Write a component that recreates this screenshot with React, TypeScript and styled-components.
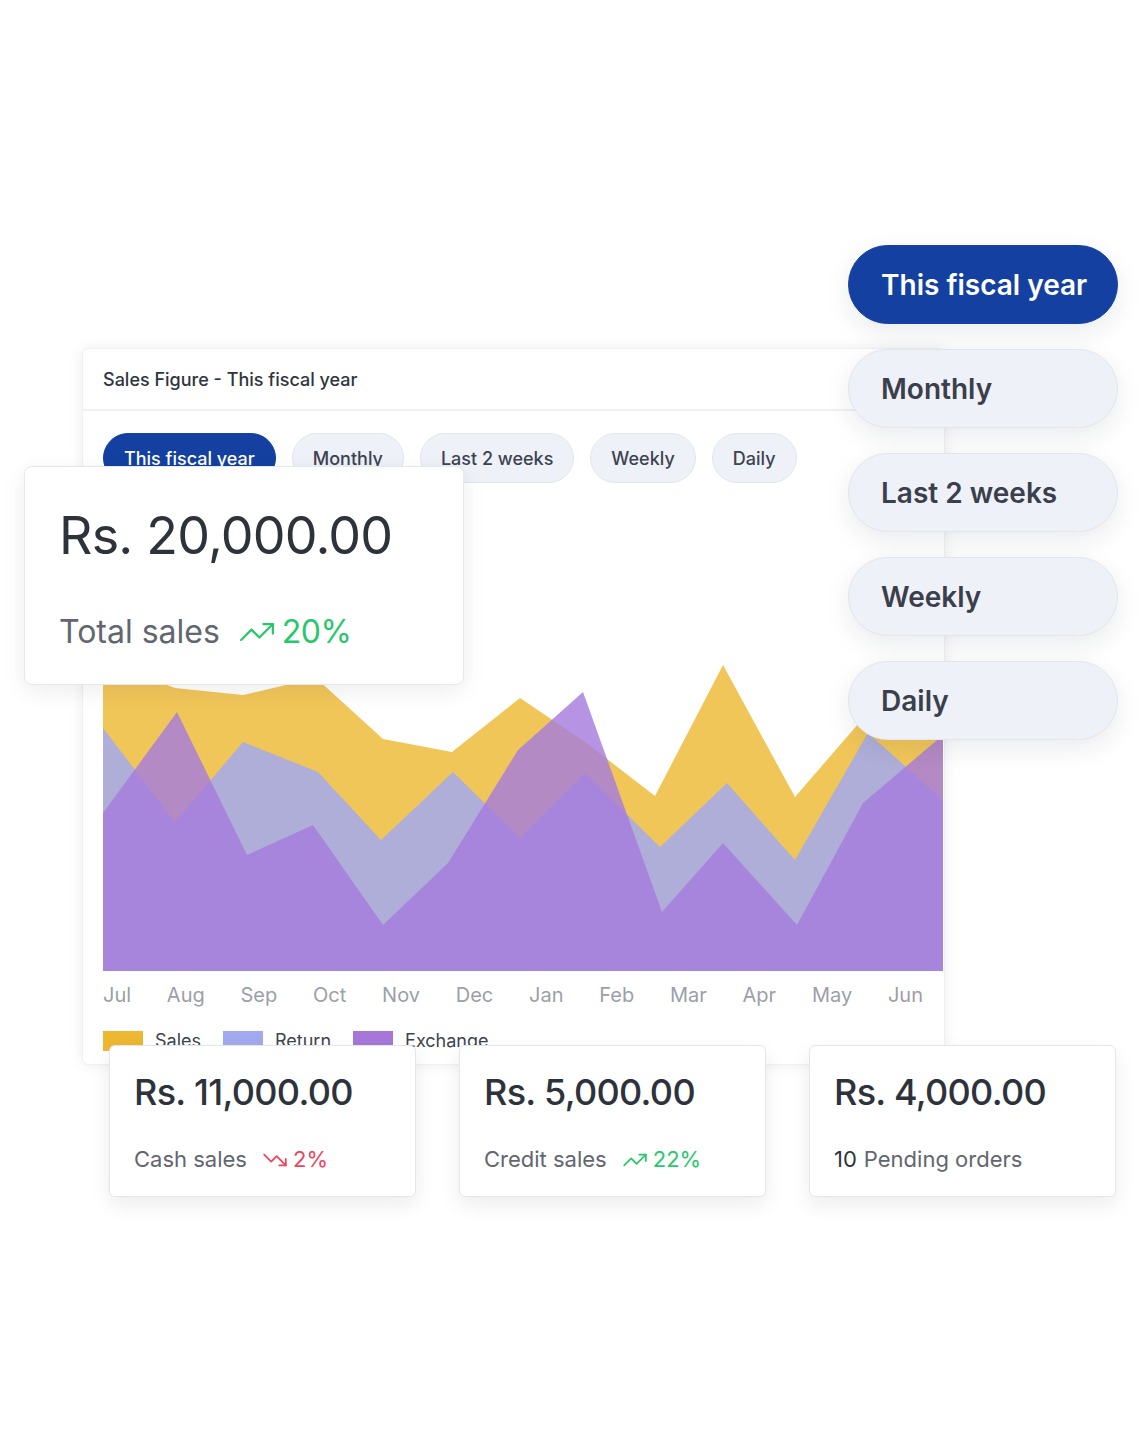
import React from "react";
import styled, { createGlobalStyle } from "styled-components";
import { TrendingUp, TrendingDown } from "lucide-react";

const GlobalStyle = createGlobalStyle`
  html, body { margin: 0; padding: 0; background: #ffffff; }
  body { font-family: Inter, "Noto Sans", sans-serif; -webkit-font-smoothing: antialiased; }
  * { box-sizing: border-box; }
`;

const Stage = styled.div`
  position: relative;
  width: 1140px;
  height: 1441px;
  overflow: hidden;
  padding: 348px 0 0 82px;
  background: #ffffff;
`;

const MainCard = styled.section`
  width: 863px;
  height: 717px;
  background: #fff;
  border: 1px solid #eef0f3;
  border-radius: 6px;
  box-shadow: 0 0 14px rgba(20, 30, 50, 0.07);
  display: flex;
  flex-direction: column;
`;

const CardHeader = styled.header`
  height: 62px;
  flex: none;
  display: flex;
  align-items: center;
  padding: 0 20px;
  border-bottom: 2px solid #eef0f3;
  font-size: 18px;
  font-weight: 500;
  color: #2f3540;
`;

const CardBody = styled.div`
  padding: 22px 20px 0 20px;
  display: flex;
  flex-direction: column;
`;

const TabRow = styled.div`
  display: flex;
  gap: 16px;
`;

const Tab = styled.div<{ $active?: boolean }>`
  height: 50px;
  padding: 0 20px;
  display: flex;
  align-items: center;
  border-radius: 25px;
  font-size: 18px;
  font-weight: 500;
  border: 1px solid ${(p) => (p.$active ? "#1441a1" : "#e3e6ed")};
  background: ${(p) => (p.$active ? "#1441a1" : "#eef1f8")};
  color: ${(p) => (p.$active ? "#ffffff" : "#3d4350")};
`;

const ChartSvg = styled.svg`
  display: block;
  margin-top: 17px;
  width: 840px;
  height: 471px;
`;

const MonthRow = styled.div`
  margin-top: 12px;
  width: 820px;
  display: flex;
  justify-content: space-between;
  font-size: 20px;
  line-height: 24px;
  color: #9b9fa7;
`;

const Legend = styled.div`
  margin-top: 24px;
  display: flex;
  align-items: center;
  gap: 12px;
  font-size: 18px;
  line-height: 20px;
  color: #3d4350;
`;

const LegendItem = styled.div`
  display: flex;
  align-items: center;
  gap: 12px;
  margin-right: 10px;
`;

const Swatch = styled.span<{ $color: string }>`
  width: 40px;
  height: 20px;
  background: ${(p) => p.$color};
  display: inline-block;
`;

const TotalCard = styled.div`
  position: absolute;
  left: 24px;
  top: 466px;
  width: 440px;
  height: 219px;
  background: #fff;
  border: 1px solid #e6e8ec;
  border-radius: 8px;
  box-shadow: 0 6px 22px rgba(20, 30, 50, 0.08);
  padding: 37px 34px 0 34px;
`;

const BigAmount = styled.div`
  font-size: 52px;
  line-height: 63px;
  font-weight: 400;
  color: #2e333b;
  letter-spacing: -0.8px;
`;

const StatLine = styled.div<{ $size: number; $gap: number }>`
  display: flex;
  align-items: center;
  font-size: ${(p) => p.$size}px;
  line-height: ${(p) => Math.round(p.$size * 1.22)}px;
  color: #62666f;
  margin-top: ${(p) => p.$gap}px;
`;

const Label = styled.span<{ $space: number }>`
  margin-right: ${(p) => p.$space}px;
`;

const Change = styled.span<{ $up?: boolean; $space: number }>`
  display: inline-flex;
  align-items: center;
  gap: ${(p) => p.$space}px;
  color: ${(p) => (p.$up ? "#27c86a" : "#f0435e")};
`;

const Pct = styled.span`
  letter-spacing: -0.5px;
`;

const PillStack = styled.div`
  position: absolute;
  left: 848px;
  top: 245px;
  width: 270px;
  display: flex;
  flex-direction: column;
  gap: 25px;
`;

const BigPill = styled.div<{ $active?: boolean }>`
  height: 79px;
  border-radius: 40px;
  display: flex;
  align-items: center;
  padding-left: 32px;
  font-size: 28px;
  font-weight: 600;
  border: 1px solid ${(p) => (p.$active ? "#1441a1" : "#e2e5eb")};
  background: ${(p) => (p.$active ? "#1441a1" : "#eef1f8")};
  color: ${(p) => (p.$active ? "#ffffff" : "#3a3f4b")};
  box-shadow: 0 8px 26px rgba(20, 30, 50, 0.09);
`;

const BottomRow = styled.div`
  position: absolute;
  left: 109px;
  top: 1045px;
  display: flex;
  gap: 43px;
`;

const SmallCard = styled.div`
  width: 307px;
  height: 152px;
  background: #fff;
  border: 1px solid #e4e6ea;
  border-radius: 6px;
  box-shadow: 0 8px 20px rgba(20, 30, 50, 0.08);
  padding: 24px 24px 0 24px;
`;

const MidAmount = styled.div`
  font-size: 36px;
  line-height: 44px;
  font-weight: 500;
  color: #2e333b;
  letter-spacing: -0.7px;
`;

const Count = styled.span`
  color: #2e333b;
  margin-right: 7px;
`;

const OX = 103;
const OY = 500;
const BASE = 971;

const toPoints = (pts: [number, number][]) => {
  const first = pts[0][0];
  const last = pts[pts.length - 1][0];
  const line = pts.map(([x, y]) => `${x - OX},${y - OY}`).join(" ");
  return `${first - OX},${BASE - OY} ${line} ${last - OX},${BASE - OY}`;
};

const sales: [number, number][] = [
  [103, 660], [175, 688], [243, 695], [316, 678], [383, 739], [452, 752],
  [520, 698], [585, 742], [655, 796], [723, 665], [795, 797], [865, 716], [943, 695],
];
const returns: [number, number][] = [
  [103, 728], [175, 822], [243, 742], [318, 772], [381, 840], [453, 772],
  [520, 838], [585, 773], [660, 847], [727, 783], [795, 860], [868, 733], [943, 800],
];
const exchange: [number, number][] = [
  [103, 813], [177, 712], [247, 855], [313, 825], [383, 925], [448, 863],
  [518, 750], [583, 692], [662, 912], [723, 843], [797, 925], [863, 803], [943, 735],
];

const months = ["Jul", "Aug", "Sep", "Oct", "Nov", "Dec", "Jan", "Feb", "Mar", "Apr", "May", "Jun"];
const tabs = ["This fiscal year", "Monthly", "Last 2 weeks", "Weekly", "Daily"];

export default function App() {
  return (
    <>
      <GlobalStyle />
      <Stage>
        <MainCard>
          <CardHeader>Sales Figure - This fiscal year</CardHeader>
          <CardBody>
            <TabRow>
              {tabs.map((t, i) => (
                <Tab key={t} $active={i === 0}>{t}</Tab>
              ))}
            </TabRow>
            <ChartSvg viewBox="0 0 840 471">
              <polygon points={toPoints(sales)} fill="#edb830" fillOpacity={0.8} />
              <polygon points={toPoints(returns)} fill="#a3a9ee" fillOpacity={0.85} />
              <polygon points={toPoints(exchange)} fill="#a67cdd" fillOpacity={0.82} />
            </ChartSvg>
            <MonthRow>
              {months.map((m) => (
                <span key={m}>{m}</span>
              ))}
            </MonthRow>
            <Legend>
              <LegendItem><Swatch $color="#edb731" />Sales</LegendItem>
              <LegendItem><Swatch $color="#a2a9ee" />Return</LegendItem>
              <LegendItem><Swatch $color="#a577d9" />Exchange</LegendItem>
            </Legend>
          </CardBody>
        </MainCard>

        <TotalCard>
          <BigAmount>Rs. 20,000.00</BigAmount>
          <StatLine $size={32} $gap={45}>
            <Label $space={18}>Total sales</Label>
            <Change $up $space={6}>
              <TrendingUp size={38} strokeWidth={1.4} />
              <Pct>20%</Pct>
            </Change>
          </StatLine>
        </TotalCard>

        <PillStack>
          {tabs.map((t, i) => (
            <BigPill key={t} $active={i === 0}>{t}</BigPill>
          ))}
        </PillStack>

        <BottomRow>
          <SmallCard>
            <MidAmount>Rs. 11,000.00</MidAmount>
            <StatLine $size={22} $gap={32}>
              <Label $space={15}>Cash sales</Label>
              <Change $space={5}>
                <TrendingDown size={26} strokeWidth={1.6} />
                2%
              </Change>
            </StatLine>
          </SmallCard>
          <SmallCard>
            <MidAmount>Rs. 5,000.00</MidAmount>
            <StatLine $size={22} $gap={32}>
              <Label $space={15}>Credit sales</Label>
              <Change $up $space={5}>
                <TrendingUp size={26} strokeWidth={1.6} />
                22%
              </Change>
            </StatLine>
          </SmallCard>
          <SmallCard>
            <MidAmount>Rs. 4,000.00</MidAmount>
            <StatLine $size={22} $gap={32}>
              <Count>10</Count>
              <span>Pending orders</span>
            </StatLine>
          </SmallCard>
        </BottomRow>
      </Stage>
    </>
  );
}
